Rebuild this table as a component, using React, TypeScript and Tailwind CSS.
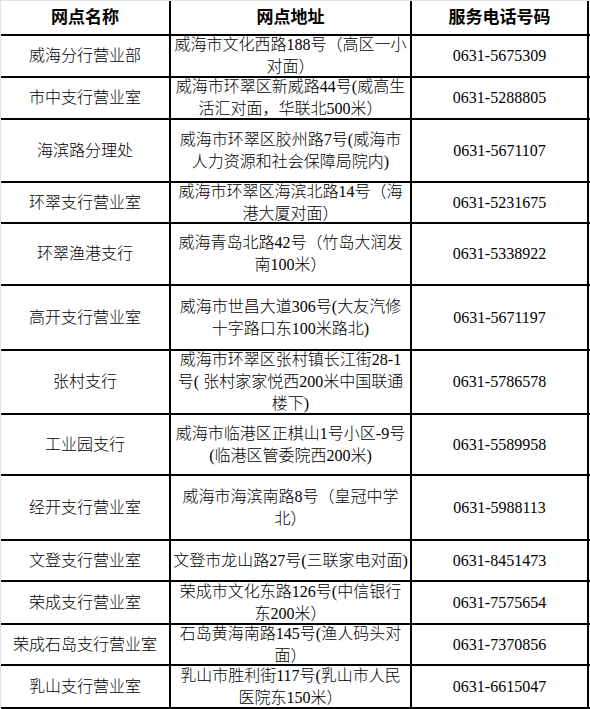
import React from "react";

type Row = { name: string; addr: string[]; phone: string; h: string };

const rows: Row[] = [
  { name: "威海分行营业部", addr: ["威海市文化西路188号（高区一小", "对面）"], phone: "0631-5675309", h: "h-[42px]" },
  { name: "市中支行营业室", addr: ["威海市环翠区新威路44号(威高生", "活汇对面，华联北500米）"], phone: "0631-5288805", h: "h-[42px]" },
  { name: "海滨路分理处", addr: ["威海市环翠区胶州路7号(威海市", "人力资源和社会保障局院内)"], phone: "0631-5671107", h: "h-[63px]" },
  { name: "环翠支行营业室", addr: ["威海市环翠区海滨北路14号（海", "港大厦对面）"], phone: "0631-5231675", h: "h-[41px]" },
  { name: "环翠渔港支行", addr: ["威海青岛北路42号（竹岛大润发", "南100米）"], phone: "0631-5338922", h: "h-[62px]" },
  { name: "高开支行营业室", addr: ["威海市世昌大道306号(大友汽修", "十字路口东100米路北)"], phone: "0631-5671197", h: "h-[65px]" },
  { name: "张村支行", addr: ["威海市环翠区张村镇长江街28-1", "号( 张村家家悦西200米中国联通", "楼下)"], phone: "0631-5786578", h: "h-[64px]" },
  { name: "工业园支行", addr: ["威海市临港区正棋山1号小区-9号", "(临港区管委院西200米)"], phone: "0631-5589958", h: "h-[61px]" },
  { name: "经开支行营业室", addr: ["威海市海滨南路8号（皇冠中学", "北）"], phone: "0631-5988113", h: "h-[65px]" },
  { name: "文登支行营业室", addr: ["文登市龙山路27号(三联家电对面)"], phone: "0631-8451473", h: "h-[41px]" },
  { name: "荣成支行营业室", addr: ["荣成市文化东路126号(中信银行", "东200米）"], phone: "0631-7575654", h: "h-[43px]" },
  { name: "荣成石岛支行营业室", addr: ["石岛黄海南路145号(渔人码头对", "面）"], phone: "0631-7370856", h: "h-[41px]" },
  { name: "乳山支行营业室", addr: ["乳山市胜利街117号(乳山市人民", "医院东150米）"], phone: "0631-6615047", h: "h-[43px]" },
];

const font = { fontFamily: '"Liberation Serif", "Noto Sans CJK SC", serif' };

export default function App() {
  return (
    <div
      className="w-[590px] h-[709px] bg-white border-l border-t border-[#dde2ec] text-black text-[16px] overflow-hidden"
      style={font}
    >
      <div className="flex h-[35px] border-b-2 border-black">
        <div className="w-[170px] shrink-0 border-r-2 border-black flex items-center justify-center font-bold text-[17px]">
          网点名称
        </div>
        <div className="w-[241px] shrink-0 border-r-2 border-black flex items-center justify-center font-bold text-[17px]">
          网点地址
        </div>
        <div className="w-[177px] shrink-0 border-r-2 border-black flex items-center justify-center font-bold text-[17px]">
          服务电话号码
        </div>
      </div>
      {rows.map((r) => (
        <div key={r.name} className={`flex border-b-2 border-black ${r.h}`}>
          <div className="w-[170px] shrink-0 border-r-2 border-black flex items-center justify-center whitespace-nowrap font-light">
            {r.name}
          </div>
          <div className="w-[241px] shrink-0 border-r-2 border-black flex flex-col items-center justify-center leading-[22px] whitespace-nowrap font-light">
            {r.addr.map((l, i) => (
              <span key={i}>{l}</span>
            ))}
          </div>
          <div className="w-[177px] shrink-0 border-r-2 border-black flex items-center justify-center">
            {r.phone}
          </div>
        </div>
      ))}
    </div>
  );
}
